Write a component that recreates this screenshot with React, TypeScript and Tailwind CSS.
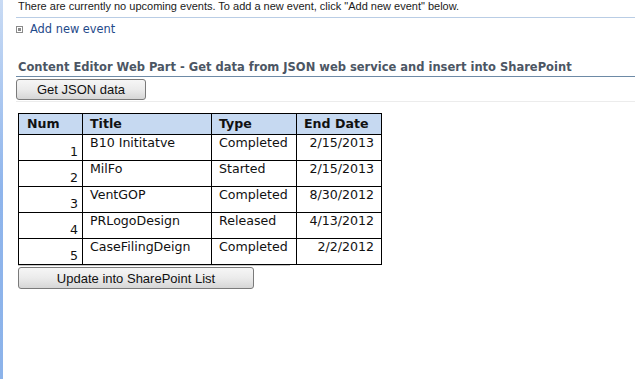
import React from "react";

type Row = { num: number; title: string; type: string; end: string };

const ROWS: Row[] = [
  { num: 1, title: "B10 Inititatve", type: "Completed", end: "2/15/2013" },
  { num: 2, title: "MilFo", type: "Started", end: "2/15/2013" },
  { num: 3, title: "VentGOP", type: "Completed", end: "8/30/2012" },
  { num: 4, title: "PRLogoDesign", type: "Released", end: "4/13/2012" },
  { num: 5, title: "CaseFilingDeign", type: "Completed", end: "2/2/2012" },
];

const verdana = "font-['DejaVu_Sans',Verdana,sans-serif]";
const arial = "font-['Liberation_Sans',Arial,sans-serif]";

const XpButton = ({ label, className }: { label: string; className: string }) => (
  <button
    className={`${arial} ${className} block rounded-[3px] border border-[#7a7a7a] bg-gradient-to-b from-[#f6f6f6] via-[#ebebeb] to-[#d6d6d6] text-[13px] leading-none text-[#111]`}
  >
    {label}
  </button>
);

export default function App() {
  return (
    <div className="flex h-[379px] w-[635px] overflow-hidden bg-white">
      {/* left nav edge */}
      <div className="w-[3px] shrink-0 bg-gradient-to-b from-[#c9dbf4] via-[#8fb5ec] to-[#8cb3ea]" />

      <div className="flex-1 pl-[13px]">
        <div className="border-b border-[#b9cde5] pb-[5px] pl-[2px]">
          <p className={`${arial} text-[11px] leading-[12px] text-[#1a1a1a]`}>
            There are currently no upcoming events. To add a new event, click "Add new event" below.
          </p>
        </div>

        <div className="mt-[5px] flex items-center gap-[7px]">
          <span className="flex h-[7px] w-[7px] items-center justify-center border border-[#8a8a8a]">
            <span className="h-[3px] w-[3px] bg-[#8a8a8a]" />
          </span>
          <a className={`${verdana} text-[11.4px] leading-[13px] text-[#1f4a8a]`}>Add new event</a>
        </div>

        <h2
          className={`${verdana} mt-[24px] border-b border-[#6d8aa6] pb-[2px] pl-[2px] text-[11.5px] font-bold leading-[14px] text-[#4c5664]`}
        >
          Content Editor Web Part - Get data from JSON web service and insert into SharePoint
        </h2>

        <div className="border-b border-[#ececec] pb-[1px] pt-[2px]">
          <XpButton label="Get JSON data" className="h-[21px] w-[130px]" />
        </div>

        <div className="ml-[2px] mt-[11px] w-[364px]">
          <table className={`${verdana} w-[364px] border-collapse text-[12.6px] text-[#111]`}>
            <thead>
              <tr className="h-[21px] bg-[#c6d9f1]">
                <th className="w-[64px] border border-black pl-[8px] text-left font-bold">Num</th>
                <th className="w-[129px] border border-black pl-[7px] text-left font-bold">Title</th>
                <th className="w-[85px] border border-black pl-[7px] text-left font-bold">Type</th>
                <th className="border border-black pl-[7px] text-left font-bold">End Date</th>
              </tr>
            </thead>
            <tbody>
              {ROWS.map((r) => (
                <tr key={r.num} className="h-[26px]">
                  <td className="border border-black pb-[1px] pr-[4px] text-right align-bottom leading-[14px]">{r.num}</td>
                  <td className="border border-black pl-[7px] pt-[1px] align-top leading-[14px]">{r.title}</td>
                  <td className="border border-black pl-[7px] pt-[1px] align-top leading-[14px]">{r.type}</td>
                  <td className="border border-black pr-[7px] pt-[1px] text-right align-top leading-[14px]">{r.end}</td>
                </tr>
              ))}
            </tbody>
          </table>
          <div className="w-[272px] border-t border-[#c8c8c8] pt-[1px]">
            <XpButton label="Update into SharePoint List" className="h-[22px] w-[236px]" />
          </div>
        </div>
      </div>
    </div>
  );
}
